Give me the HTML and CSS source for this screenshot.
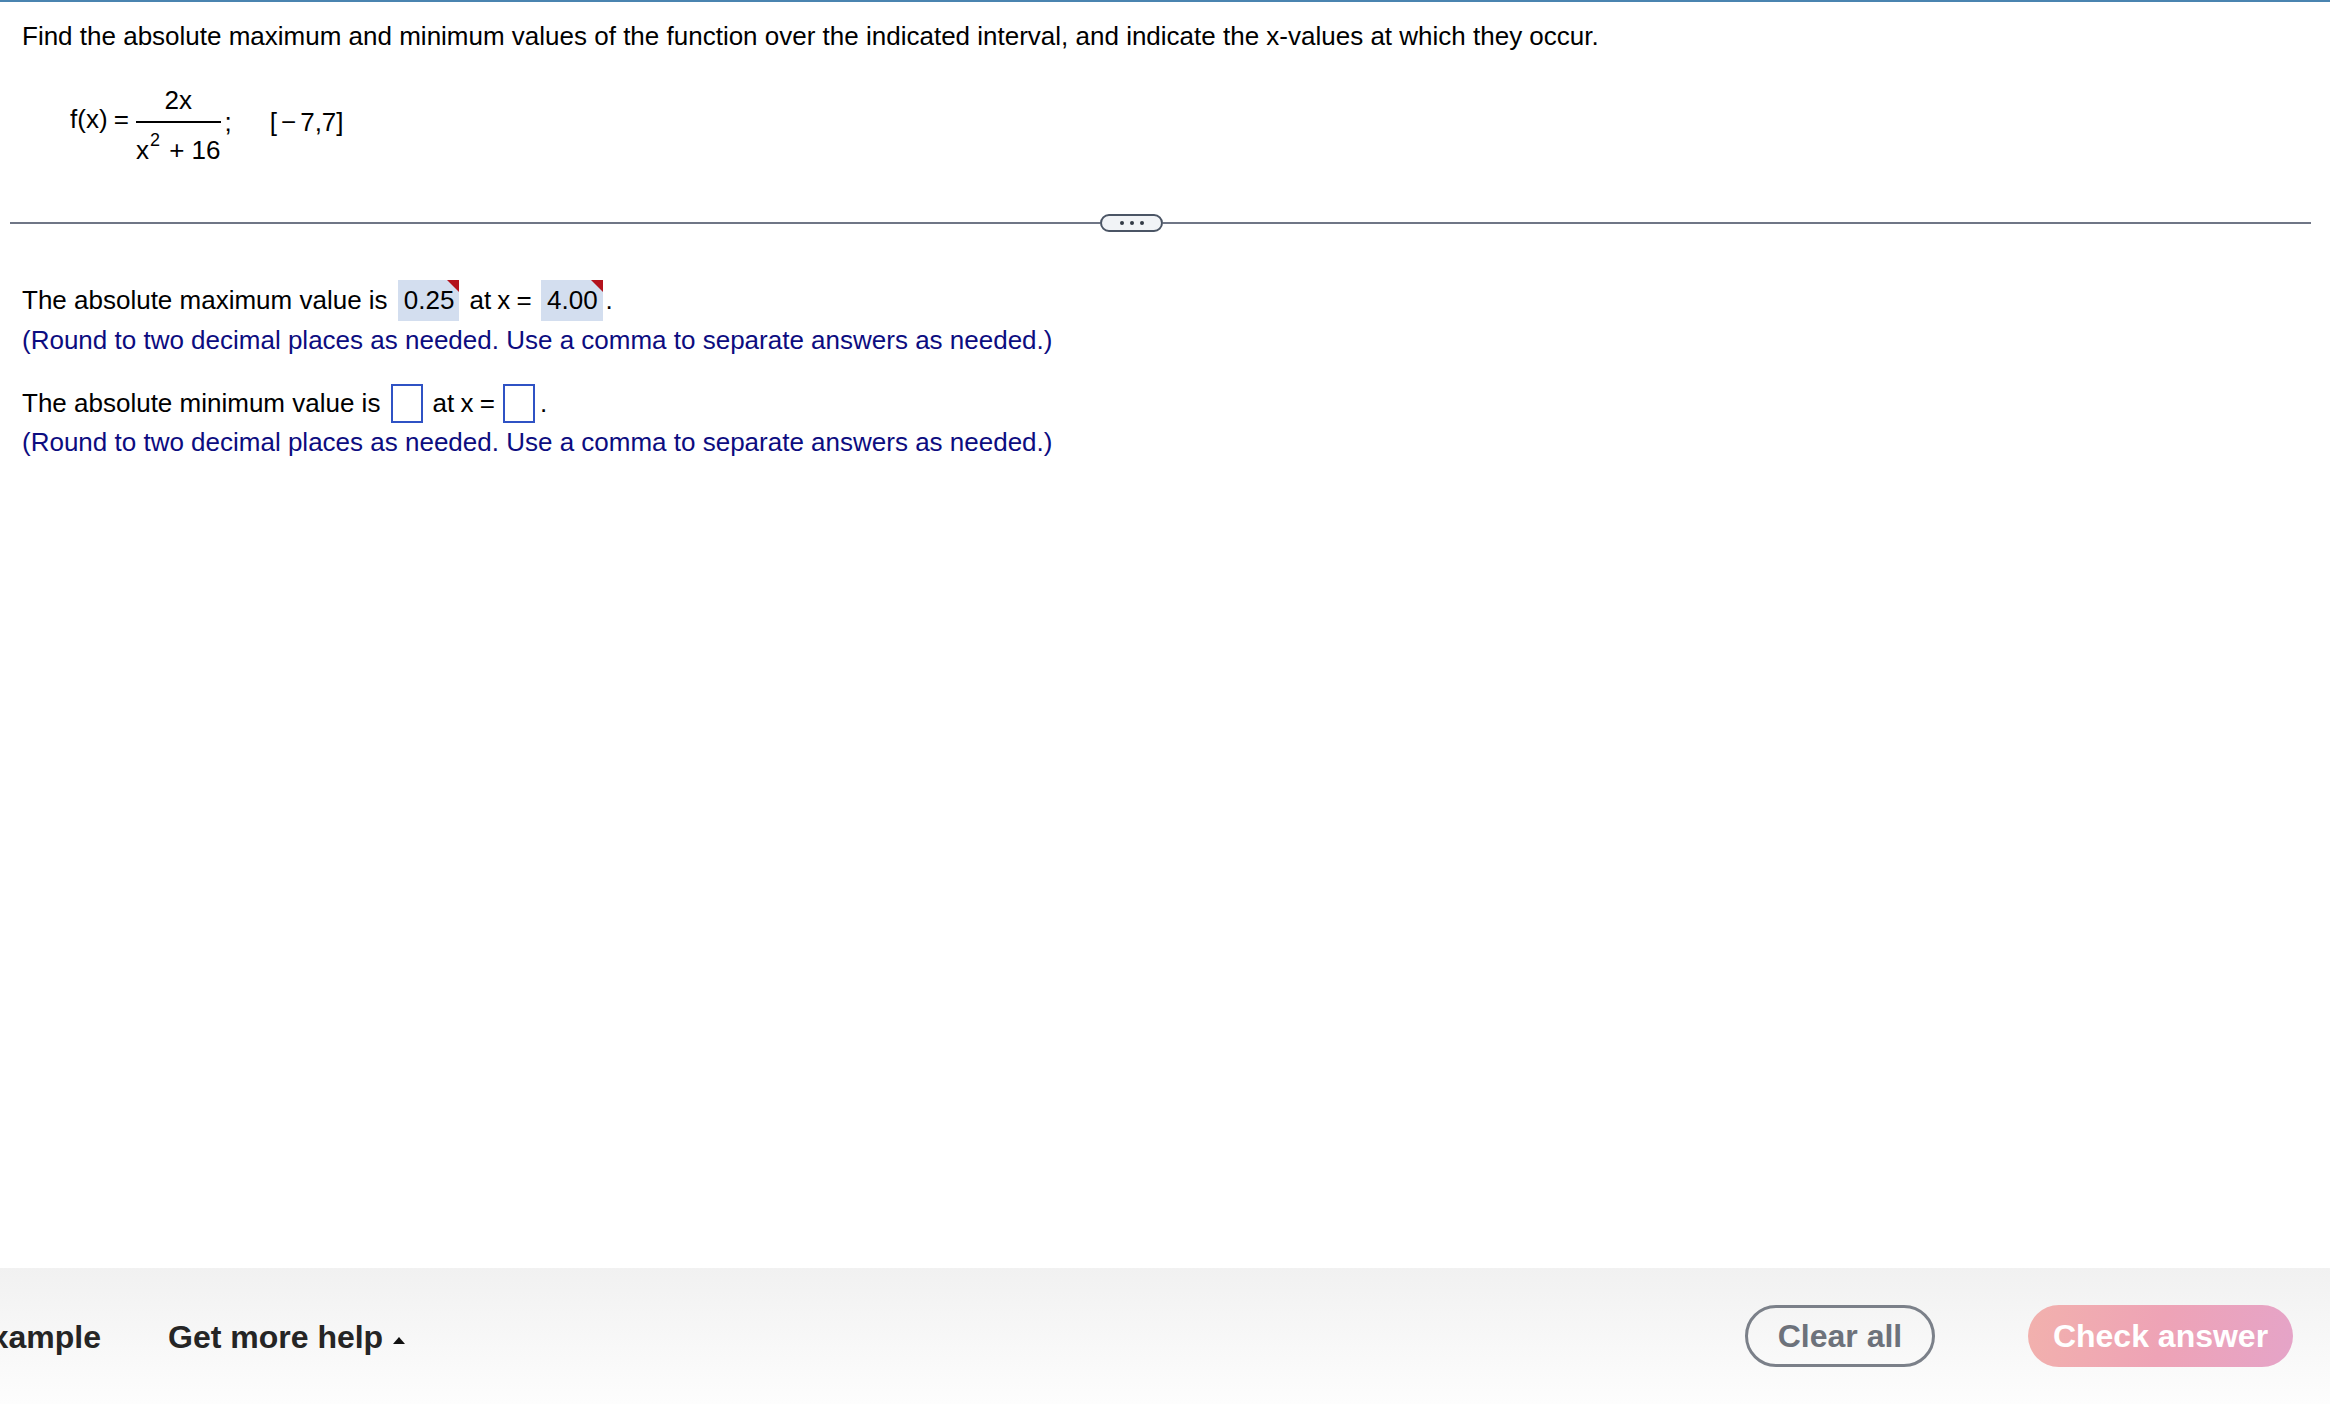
FILE: index.html
```html
<!DOCTYPE html>
<html lang="en">
<head>
  <meta charset="UTF-8" />
  <meta name="viewport" content="width=device-width, initial-scale=1.0" />
  <title>Question</title>
  <link rel="stylesheet" href="styles.css">
</head>
<body>
  <div class="page">
    <div class="question">
      <p class="prompt">Find the absolute maximum and minimum values of the function over the indicated interval, and indicate the x-values at which they occur.</p>
      <div class="formula">
        <span class="fx">f(x) =</span>
        <span class="frac">
          <span class="num">2x</span>
          <span class="den">x<sup>2</sup> + 16</span>
        </span>
        <span class="semi">;</span>
        <span class="interval">[<span class="minus">−</span>7,7]</span>
      </div>
    </div>

    <div class="divider">
      <button class="more" title="More"><span></span><span></span><span></span></button>
    </div>

    <div class="answers">
      <div class="part">
        <p class="line">The absolute maximum value is <span class="answer">0.25</span><span class="eq">at x = </span><span class="answer">4.00</span>.</p>
        <p class="hint">(Round to two decimal places as needed. Use a comma to separate answers as needed.)</p>
      </div>
      <div class="part">
        <p class="line">The absolute minimum value is <span class="blank"></span><span class="eq">at x =</span><span class="blank"></span>.</p>
        <p class="hint">(Round to two decimal places as needed. Use a comma to separate answers as needed.)</p>
      </div>
    </div>
  </div>

  <footer class="toolbar">
    <div class="example"><span>View an example</span></div>
    <div class="help">
      Get more help
      <svg class="caret" width="12" height="7" viewBox="0 0 12 7"><path d="M0 7 L6 0 L12 7 Z" fill="#111"/></svg>
    </div>
    <button class="btn clear">Clear all</button>
    <button class="btn check">Check answer</button>
  </footer>
</body>
</html>
```

FILE: styles.css
```css
html, body {
  height: 100%;
}

body {
  margin: 0;
  font-family: "Liberation Sans", Arial, sans-serif;
  font-size: 26px;
  color: #000;
  background: white;
  display: flex;
  flex-direction: column;
  overflow: hidden;
  border-top: 2px solid #4a84b0;
  box-sizing: border-box;
}

.page {
  flex: 1;
}

p {
  margin: 0;
  line-height: 39px;
}

.question {
  padding: 15px 22px 49px;
}

.formula {
  display: flex;
  align-items: center;
  margin: 23px 0 0 48px;
  line-height: 39px;
}

.fx {
  margin: 0 4px 6px 0;
  word-spacing: -1px;
}

.frac {
  display: inline-flex;
  flex-direction: column;
  align-items: stretch;
  text-align: center;
  padding: 0 3px;
}

.num {
  line-height: 30px;
  padding: 6px 0;
  border-bottom: 2px solid #000;
}

.den {
  line-height: 30px;
  padding-top: 12px;
}

.den sup {
  font-size: 18px;
  line-height: 0;
  vertical-align: 13px;
  margin: 0 2px 0 1px;
}

.semi {
  margin-left: 1px;
}

.interval {
  margin-left: 38px;
}

.minus {
  margin: 0 4px;
}

.divider {
  display: flex;
  align-items: center;
  margin: 0 19px 0 10px;
  height: 18px;
}

.divider::before,
.divider::after {
  content: "";
  height: 2px;
  background: #6f7686;
}

.divider::before {
  width: 1090px;
}

.divider::after {
  flex: 1;
}

.more {
  width: 63px;
  height: 18px;
  padding: 0;
  border: 2px solid #4b5565;
  border-radius: 9px;
  background: #f1f3f6;
  display: flex;
  align-items: center;
  justify-content: center;
  gap: 6px;
  box-sizing: border-box;
}

.more span {
  width: 4px;
  height: 4px;
  border-radius: 50%;
  background: #333a45;
}

.answers {
  padding: 48px 22px 0;
}

.part {
  margin-bottom: 24px;
}

.eq {
  word-spacing: -1px;
}

.answer {
  position: relative;
  display: inline-block;
  background: #d3deef;
  padding: 1px 5px 1px 6px;
  margin: 0 10px 0 3px;
  line-height: 39px;
}

.answers .part:first-child .answer:last-child {
  margin: 0 3px 0 3px;
}

.answer::after {
  content: "";
  position: absolute;
  top: 0;
  right: 0;
  border-top: 12px solid #b3121c;
  border-left: 12px solid transparent;
}

.blank {
  display: inline-block;
  width: 28px;
  height: 35px;
  border: 2px solid #2f52c4;
  vertical-align: -11px;
  margin: 0 10px 0 3px;
}

.line .blank:last-child {
  margin: 0 5px 0 8px;
}

.hint {
  color: #0c0c80;
}

.toolbar {
  height: 136px;
  flex-shrink: 0;
  display: flex;
  align-items: center;
  padding-right: 37px;
  background: linear-gradient(#f1f1f1, #fdfdfd);
  font-weight: bold;
  font-size: 32px;
  color: #252525;
}

.example {
  width: 101px;
  display: flex;
  justify-content: flex-end;
  white-space: nowrap;
  padding-top: 3px;
}

.help {
  margin-left: 67px;
  display: flex;
  align-items: center;
  white-space: nowrap;
  padding-top: 3px;
}

.caret {
  margin: 6px 0 0 10px;
}

.btn {
  height: 62px;
  border-radius: 31px;
  font-family: inherit;
  font-weight: bold;
  font-size: 32px;
  box-sizing: border-box;
  cursor: pointer;
}

.clear {
  margin-left: auto;
  width: 190px;
  border: 3px solid #7b8089;
  background: transparent;
  color: #6d727b;
}

.check {
  margin-left: 93px;
  width: 265px;
  border: none;
  color: #fff;
  background: linear-gradient(100deg, #f2b1ad 0%, #eea3b6 50%, #e5a4c8 100%);
}
```
